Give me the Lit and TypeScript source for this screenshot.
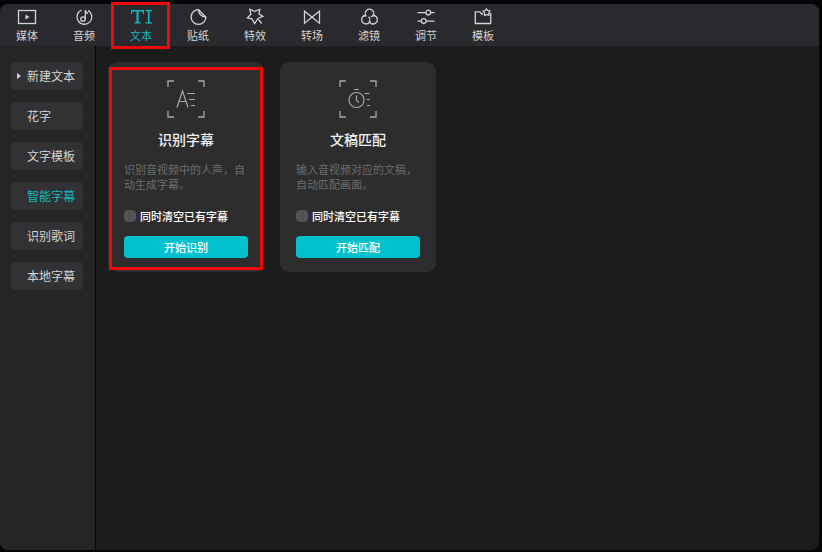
import { LitElement, html, css, svg, nothing } from "lit";
import type { SVGTemplateResult } from "lit";
import { customElement, property, state } from "lit/decorators.js";
import { classMap } from "lit/directives/class-map.js";

interface Tab {
  label: string;
  icon: SVGTemplateResult;
}

const tabs: Tab[] = [
  {
    label: "媒体",
    icon: svg`<rect x="1.500" y="3.500" width="17" height="13"/><path d="M8.500 7.500v5l4-2.500z" fill="currentColor" stroke="none"/>`,
  },
  {
    label: "音频",
    icon: svg`<path d="M7.600 3A7.400 7.400 0 1 0 14 3.400"/><circle cx="9" cy="12" r="2.200"/><path d="M11.300 12V3.200c.3 1.900 1.100 2.800 2.800 3.400"/>`,
  },
  {
    label: "文本",
    icon: svg`<g stroke="none" fill="currentColor"><path d="M0 3h13v4h-1l-.6-2.500H7.600V15l2 .4v1H3.500v-1l2-.4V4.500H1.600L1 7H0z"/><path d="M14.500 3H21v1.200h-2.400v11H21v1.200h-6.500v-1.200h2.400v-11h-2.400z"/></g>`,
  },
  {
    label: "贴纸",
    icon: svg`<path d="M10.500 2.600a7.400 7.400 0 1 0 7.400 7.400z"/><path d="M10.500 2.600c.3 4.600 2.300 7 7.400 7.400"/>`,
  },
  {
    label: "特效",
    icon: svg`<path d="M12.800 11.500 17.800 9.300 14 6.900 14.800 2.500 9.700 4.300 4.800 2.300 5.900 7.300 2.500 10.800 6.900 11.800 9.700 16.600 12.800 11.500M13.500 12.500l3.300 4"/>`,
  },
  {
    label: "转场",
    icon: svg`<path d="M2.500 4.200v12l15-12v12z"/>`,
  },
  {
    label: "滤镜",
    icon: svg`<path d="M7.400 9.500A4.300 4.300 0 1 1 13.600 9.500"/><path d="M7 8.500a4.200 4.200 0 1 0 3.900 5.600c.4-1.700-.1-3.300-1.400-4.400"/><path d="M14 8.500a4.200 4.200 0 1 1-3.800 5.800"/><path d="M14.600 7.200c-.4 1.300-1.400 2.300-2.800 2.700"/>`,
  },
  {
    label: "调节",
    icon: svg`<path d="M1.500 5.600h8.300M14.800 5.600h3.700M1.500 14.100h3.700M10.200 14.100h8.300"/><circle cx="12.300" cy="5.600" r="2.400"/><circle cx="7.700" cy="14.100" r="2.400"/>`,
  },
  {
    label: "模板",
    icon: svg`<path d="M10 7H8.500L7 4.800H2.300v11.700h15.400V6"/><path d="M13.300 1.800l1.300 1.600 2.300.5-1.100 2 .2 2.300-2.200-.6-2.200.8-.2-2.300-1.300-1.900 2.200-.7z"/>`,
  },
];

const sections = ["新建文本", "花字", "文字模板", "智能字幕", "识别歌词", "本地字幕"];

const corners = svg`<path stroke-width="1.300" d="M1 7V1h6M31 1h6v6M37 31v6h-6M7 37H1v-6"/>`;

const letterIcon = svg`${corners}<path d="M10 27.500 15.500 11 21 27.500M12 21.500h7M20 13.500h8M22 19.500h6M24 25.500h4"/>`;

const timerIcon = svg`${corners}<circle cx="17.500" cy="20" r="7.500"/><path d="M15 9.500h5M17.500 15.500v5l2.500 2M25.500 13.500h5M28 19.500h3M28 25.500h3"/>`;

@customElement("caption-card")
export class CaptionCard extends LitElement {
  @property() heading = "";
  @property() description = "";
  @property() action = "";
  @property({ attribute: false }) icon: SVGTemplateResult | typeof nothing = nothing;
  @property({ type: Boolean }) marked = false;

  static styles = css`
    :host {
      display: block;
      position: relative;
      box-sizing: border-box;
      width: 156px;
      padding: 18px 16px 14px;
      border-radius: 9px;
      background: #2d2d2d;
    }
    :host([marked])::after {
      content: "";
      position: absolute;
      inset: 5px 1px 2px;
      border: 3px solid #ee0a0a;
      pointer-events: none;
    }
    .icon {
      display: block;
      width: 38px;
      height: 38px;
      margin: 0 auto;
      fill: none;
      stroke: #a6a6a6;
      stroke-width: 1.2;
    }
    h2 {
      margin: 11px 0 13px;
      font-size: 14px;
      line-height: 20px;
      font-weight: 500;
      text-align: center;
      color: #f0f0f0;
    }
    p {
      margin: 0;
      font-size: 11px;
      line-height: 15px;
      color: #6c6c6c;
    }
    label {
      display: flex;
      align-items: center;
      gap: 4px;
      margin: 16px 0 12px;
      font-size: 11px;
      line-height: 16px;
      font-weight: 500;
      color: #fff;
    }
    input {
      appearance: none;
      width: 12px;
      height: 12px;
      margin: 0;
      border-radius: 4px;
      background: #515157;
    }
    input:checked {
      background: #00c1cd;
    }
    button {
      display: block;
      width: 100%;
      height: 22px;
      padding: 0;
      border: 0;
      border-radius: 4px;
      background: #00c1cd;
      color: #fff;
      font: inherit;
      font-size: 11px;
      line-height: 22px;
      font-weight: 500;
    }
  `;

  render() {
    return html`
      <svg class="icon" viewBox="0 0 38 38" aria-hidden="true">${this.icon}</svg>
      <h2>${this.heading}</h2>
      <p>${this.description}</p>
      <label><input type="checkbox" />同时清空已有字幕</label>
      <button type="button">${this.action}</button>
    `;
  }
}

@customElement("app-root")
export class AppRoot extends LitElement {
  @state() private tab = "文本";
  @state() private section = "智能字幕";

  static styles = css`
    :host {
      display: block;
      box-sizing: border-box;
      min-height: 100vh;
      padding: 4px 3px 2px 0;
      background: #050507;
      font-family: "Noto Sans CJK SC", sans-serif;
    }
    .panel {
      display: flex;
      flex-direction: column;
      min-height: calc(100vh - 6px);
      border-radius: 8px;
      background: #1c1c1c;
    }
    .tabs {
      display: flex;
      gap: 7px;
      height: 42px;
      padding-left: 2px;
      border-radius: 8px 8px 0 0;
      background: #2a2a2e;
    }
    button {
      border: 0;
      font-family: inherit;
      color: #d2d2d4;
    }
    .tab {
      position: relative;
      display: flex;
      flex-direction: column;
      align-items: center;
      width: 50px;
      padding: 3px 0 0;
      background: none;
      font-size: 11px;
      line-height: 16px;
    }
    .tab svg {
      width: 22px;
      height: 20px;
      fill: none;
      stroke: currentColor;
      stroke-width: 1.3;
    }
    .tab.active,
    .section.active {
      color: #0fb9c0;
    }
    .tab.active::after {
      content: "";
      position: absolute;
      inset: -2px -4px -3px -5px;
      border: 3px solid #ee0a0a;
      pointer-events: none;
    }
    .body {
      display: flex;
      flex: 1;
    }
    .side {
      display: flex;
      flex-direction: column;
      gap: 12px;
      padding: 16px 12px 16px 11px;
      border-right: 1px solid #060606;
      border-bottom-left-radius: 8px;
      background: #252527;
    }
    .section {
      display: flex;
      align-items: center;
      width: 72px;
      height: 28px;
      padding: 0 0 0 6px;
      border-radius: 4px;
      background: #323235;
      font-size: 12px;
      line-height: 28px;
      white-space: nowrap;
    }
    .arrow {
      width: 4px;
      height: 6px;
      margin-right: 6px;
      fill: currentColor;
    }
    main {
      display: flex;
      flex: 1;
      flex-wrap: wrap;
      align-items: flex-start;
      align-content: flex-start;
      gap: 16px;
      padding: 16px 12px;
    }
  `;

  render() {
    return html`
      <div class="panel" lang="zh-CN">
        <nav class="tabs">
          ${tabs.map(
            (t) => html`<button
              type="button"
              class=${classMap({ tab: true, active: t.label === this.tab })}
              @click=${() => (this.tab = t.label)}
            ><svg viewBox="-1 0 22 20" aria-hidden="true">${t.icon}</svg><span>${t.label}</span></button>`
          )}
        </nav>
        <div class="body">
          <nav class="side">
            ${sections.map(
              (s, i) => html`<button
                type="button"
                class=${classMap({ section: true, active: s === this.section })}
                @click=${() => (this.section = s)}
              ><svg class="arrow" viewBox="0 0 4 6" aria-hidden="true">${i === 0 ? svg`<path d="M0 0l4 3-4 3z"/>` : nothing}</svg>${s}</button>`
            )}
          </nav>
          <main>
            <caption-card
              marked
              heading="识别字幕"
              description="识别音视频中的人声，自动生成字幕。"
              action="开始识别"
              .icon=${letterIcon}
            ></caption-card>
            <caption-card
              heading="文稿匹配"
              description="输入音视频对应的文稿，自动匹配画面。"
              action="开始匹配"
              .icon=${timerIcon}
            ></caption-card>
          </main>
        </div>
      </div>
    `;
  }
}
